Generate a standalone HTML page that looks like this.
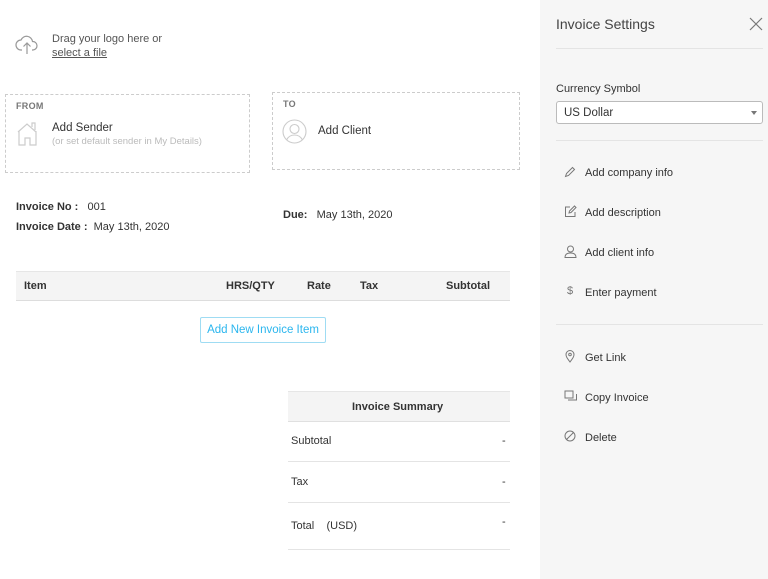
<!DOCTYPE html>
<html><head><meta charset="utf-8"><style>
*{margin:0;padding:0;box-sizing:border-box}
body{width:768px;height:579px;overflow:hidden;background:#fff;font-family:"Liberation Sans",Arial,sans-serif;color:#333;position:relative}
.a{position:absolute;white-space:nowrap}
.side{position:absolute;left:540px;top:0;width:228px;height:579px;background:#f6f6f6}
.hr{position:absolute;height:1px;background:#e4e4e4}
.box{position:absolute;border:1px dashed #ccc}
.lbl{font-size:9px;font-weight:bold;color:#777;letter-spacing:.3px}
.m{font-size:11px;color:#333}
.th{font-size:11px;font-weight:bold;color:#333}
svg{position:absolute}
</style></head><body>
<svg style="left:15px;top:34px" width="24" height="22" viewBox="0 0 24 22" fill="none" stroke="#999" stroke-width="1.2"><path d="M7 16H6a5 5 0 0 1 0-10 6 6 0 0 1 11.5 1.5A4 4 0 0 1 18 16h-1"/><path d="M12 20V9M8.5 12.5L12 9l3.5 3.5"/></svg>
<div class="a" style="left:52px;top:33px;font-size:11px;color:#555">Drag your logo here or</div>
<div class="a" style="left:52px;top:47px;font-size:11px;color:#555;text-decoration:underline">select a file</div>

<div class="box" style="left:5px;top:94px;width:245px;height:79px"></div>
<div class="a lbl" style="left:16px;top:101px">FROM</div>
<svg style="left:16px;top:121px" width="23" height="25" viewBox="0 0 23 25" fill="none" stroke="#ccc" stroke-width="1.2"><path d="M2 11L11 3l9 8M3 10v14h6v-7h5v7h6V10M16 6V2h3v7"/></svg>
<div class="a m" style="left:52px;top:122px;font-size:11.5px">Add Sender</div>
<div class="a" style="left:52px;top:136px;font-size:9.5px;color:#bbb">(or set default sender in My Details)</div>

<div class="box" style="left:272px;top:92px;width:248px;height:78px"></div>
<div class="a lbl" style="left:283px;top:99px">TO</div>
<svg style="left:282px;top:119px" width="25" height="25" viewBox="0 0 25 25" fill="none" stroke="#ccc" stroke-width="1.1"><circle cx="12.5" cy="12.5" r="11.5"/><circle cx="12.5" cy="10" r="4.5"/><path d="M4.5 21c2-4 5-5 8-5s6 1 8 5"/></svg>
<div class="a m" style="left:318px;top:125px;font-size:11.5px">Add Client</div>

<div class="a m" style="left:16px;top:201px"><b>Invoice No :</b>&nbsp;&nbsp; 001</div>
<div class="a m" style="left:16px;top:221px"><b>Invoice Date :</b>&nbsp;&nbsp;May 13th, 2020</div>
<div class="a m" style="left:283px;top:209px"><b>Due:</b>&nbsp;&nbsp;&nbsp;May 13th, 2020</div>

<div class="a" style="left:16px;top:271px;width:494px;height:30px;background:#f4f4f4;border-top:1px solid #e6e6e6;border-bottom:1px solid #ddd"></div>
<div class="a th" style="left:24px;top:280px">Item</div>
<div class="a th" style="left:226px;top:280px">HRS/QTY</div>
<div class="a th" style="left:307px;top:280px">Rate</div>
<div class="a th" style="left:360px;top:280px">Tax</div>
<div class="a th" style="left:446px;top:280px">Subtotal</div>

<div class="a" style="left:200px;top:317px;width:126px;height:26px;border:1px solid #9fdcf3;border-radius:2px;color:#2bb6ee;font-size:11.5px;text-align:center;line-height:25px">Add New Invoice Item</div>

<div class="a" style="left:288px;top:391px;width:222px;height:31px;background:#f4f4f4;border-top:1px solid #e6e6e6;border-bottom:1px solid #e0e0e0"></div>
<div class="a th" style="left:352px;top:401px">Invoice Summary</div>
<div class="a m" style="left:291px;top:435px">Subtotal</div><div class="a m" style="left:502px;top:435px">-</div>
<div class="hr" style="left:288px;top:461px;width:222px"></div>
<div class="a m" style="left:291px;top:476px">Tax</div><div class="a m" style="left:502px;top:476px">-</div>
<div class="hr" style="left:288px;top:502px;width:222px"></div>
<div class="a m" style="left:291px;top:520px">Total&nbsp;&nbsp;&nbsp; (USD)</div><div class="a m" style="left:502px;top:516px">-</div>
<div class="hr" style="left:288px;top:549px;width:222px"></div>

<div class="side"></div>
<div class="a" style="left:556px;top:16px;font-size:14px;color:#444">Invoice Settings</div>
<svg style="left:749px;top:17px" width="14" height="14" viewBox="0 0 14 14" stroke="#777" stroke-width="1.2"><path d="M1 1l12 12M13 1L1 13"/></svg>
<div class="hr" style="left:556px;top:48px;width:207px"></div>
<div class="a" style="left:556px;top:83px;font-size:11px;color:#333">Currency Symbol</div>
<div class="a" style="left:556px;top:101px;width:207px;height:23px;background:#fff;border:1px solid #bbb;border-radius:3px;font-size:11.5px;line-height:23px;padding-left:7px;color:#333">US Dollar</div>
<div class="a" style="left:751px;top:111px;width:0;height:0;border-left:3.5px solid transparent;border-right:3.5px solid transparent;border-top:4px solid #777"></div>
<div class="hr" style="left:556px;top:140px;width:207px"></div>

<svg style="left:564px;top:166px" width="12" height="12" viewBox="0 0 12 12" fill="none" stroke="#777"><path d="M1.5 10.5l1-3 6-6 2 2-6 6z"/></svg>
<div class="a m" style="left:585px;top:167px">Add company info</div>
<svg style="left:564px;top:205px" width="13" height="13" viewBox="0 0 13 13" fill="none" stroke="#777"><path d="M6 2H1.5v9.5H11V7"/><path d="M5 8l.5-2 5-5 1.5 1.5-5 5z"/></svg>
<div class="a m" style="left:585px;top:207px">Add description</div>
<svg style="left:564px;top:245px" width="13" height="13" viewBox="0 0 13 13" fill="none" stroke="#777"><circle cx="6.5" cy="4" r="3"/><path d="M1 12.5h11c0-3-2-4.5-5.5-4.5S1 9.5 1 12.5z"/></svg>
<div class="a m" style="left:585px;top:247px">Add client info</div>
<div class="a" style="left:567px;top:285px;font-size:11px;color:#777">$</div>
<div class="a m" style="left:585px;top:287px">Enter payment</div>
<div class="hr" style="left:556px;top:324px;width:207px"></div>

<svg style="left:565px;top:350px" width="10" height="13" viewBox="0 0 10 13" fill="none" stroke="#777"><path d="M5 12C2 8 1 6.5 1 4.5a4 4 0 0 1 8 0C9 6.5 8 8 5 12z"/><circle cx="5" cy="4.5" r="1.3"/></svg>
<div class="a m" style="left:585px;top:352px">Get Link</div>
<svg style="left:564px;top:390px" width="13" height="12" viewBox="0 0 13 12" fill="none" stroke="#777"><path d="M1 1h8v7H1zM4 10h8.5V4"/></svg>
<div class="a m" style="left:585px;top:392px">Copy Invoice</div>
<svg style="left:564px;top:430px" width="12" height="12" viewBox="0 0 12 12" fill="none" stroke="#777"><circle cx="6" cy="6" r="5"/><path d="M2.5 9.5l7-7"/></svg>
<div class="a m" style="left:585px;top:432px">Delete</div>
</body></html>
